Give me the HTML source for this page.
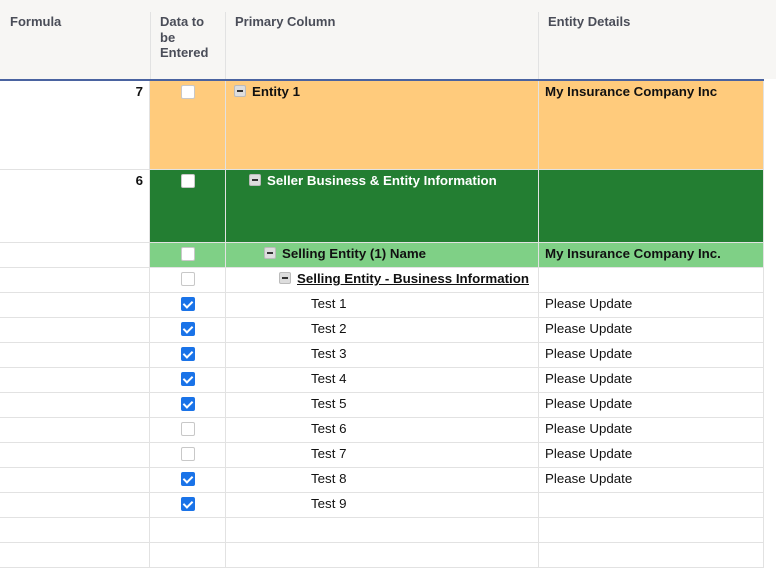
<!DOCTYPE html>
<html><head><meta charset="utf-8"><style>
*{margin:0;padding:0;box-sizing:border-box}
body{width:776px;height:547px;background:#fff;font-family:"Liberation Sans",Arial,sans-serif;font-size:13.3px;color:#111;position:relative;overflow:hidden}
.hdr{position:absolute;left:0;top:0;width:776px;height:79px;background:#f7f6f4}
.hl{position:absolute;top:12px;height:67px;width:1px;background:#e2e2e2}
.ht{position:absolute;top:14px;font-weight:bold;color:#4a4d58;font-size:13px;line-height:15.5px}
.blue{position:absolute;left:0;top:79px;width:764px;height:2px;background:#4a63a0}
.row{position:absolute;left:0;width:764px;border-bottom:1px solid #e2e2e2}
.c{position:absolute;top:0;bottom:0}
.c1{left:0;width:150px;border-right:1px solid #e2e2e2;text-align:right;padding-right:6px;font-weight:bold}
.c2{left:150px;width:76px;border-right:1px solid #e2e2e2}
.c3{left:226px;width:313px;border-right:1px solid #e2e2e2}
.c4{left:539px;width:225px;border-right:1px solid #e2e2e2;padding-left:6px}
.cb{position:absolute;left:31px;width:14px;height:14px;border:1px solid #c8c8c8;border-radius:2px;background:#fff}
.cb.on{background:#1a73e8;border-color:#1a73e8}
.cb.on:after{content:"";position:absolute;left:3px;top:1px;width:4px;height:7px;border:solid #fff;border-width:0 2px 2px 0;transform:rotate(45deg)}
.mn{display:inline-block;width:12px;height:12px;background:#ddd;border:1px solid #bbb;border-radius:2px;position:relative;vertical-align:-1px;margin-right:6px}
.mn:after{content:"";position:absolute;left:2px;top:4px;width:6px;height:2px;background:#333}
.t{position:absolute;white-space:nowrap}
</style></head><body>
<div class="hdr"></div>
<div class="hl" style="left:150px"></div><div class="hl" style="left:225px"></div><div class="hl" style="left:538px"></div>
<div class="ht" style="left:10px">Formula</div>
<div class="ht" style="left:160px">Data to<br>be<br>Entered</div>
<div class="ht" style="left:235px">Primary Column</div>
<div class="ht" style="left:548px">Entity Details</div>
<div class="blue"></div>

<div class="row" style="top:81px;height:89px">
<div class="c c1" style="padding-top:3px">7</div>
<div class="c c2" style="background:#ffcb7c"><div class="cb" style="top:4px"></div></div>
<div class="c c3" style="background:#ffcb7c"><div class="t" style="left:8px;top:3px;font-weight:bold"><span class="mn"></span>Entity 1</div></div>
<div class="c c4" style="background:#ffcb7c;padding-top:3px;font-weight:bold">My Insurance Company Inc</div>
</div>
<div class="row" style="top:170px;height:73px">
<div class="c c1" style="padding-top:3px">6</div>
<div class="c c2" style="background:#237e32"><div class="cb" style="top:4px"></div></div>
<div class="c c3" style="background:#237e32"><div class="t" style="left:23px;top:3px;font-weight:bold;color:#fff"><span class="mn"></span>Seller Business &amp; Entity Information</div></div>
<div class="c c4" style="background:#237e32"></div>
</div>
<div class="row" style="top:243px;height:25px">
<div class="c c1"></div>
<div class="c c2" style="background:#7fd086"><div class="cb" style="top:4px"></div></div>
<div class="c c3" style="background:#7fd086"><div class="t" style="left:38px;top:3px;font-weight:bold"><span class="mn"></span>Selling Entity (1) Name</div></div>
<div class="c c4" style="background:#7fd086;padding-top:3px;font-weight:bold">My Insurance Company Inc.</div>
</div>
<div class="row" style="top:268px;height:25px">
<div class="c c1"></div>
<div class="c c2"><div class="cb" style="top:4px"></div></div>
<div class="c c3"><div class="t" style="left:53px;top:3px;font-weight:bold"><span class="mn"></span><u>Selling Entity - Business Information</u></div></div>
<div class="c c4"></div>
</div>

<div class="row" style="top:293px;height:25px"><div class="c c1"></div><div class="c c2"><div class="cb on" style="top:4px"></div></div><div class="c c3"><div class="t" style="left:85px;top:3px">Test 1</div></div><div class="c c4" style="padding-top:3px">Please Update</div></div>
<div class="row" style="top:318px;height:25px"><div class="c c1"></div><div class="c c2"><div class="cb on" style="top:4px"></div></div><div class="c c3"><div class="t" style="left:85px;top:3px">Test 2</div></div><div class="c c4" style="padding-top:3px">Please Update</div></div>
<div class="row" style="top:343px;height:25px"><div class="c c1"></div><div class="c c2"><div class="cb on" style="top:4px"></div></div><div class="c c3"><div class="t" style="left:85px;top:3px">Test 3</div></div><div class="c c4" style="padding-top:3px">Please Update</div></div>
<div class="row" style="top:368px;height:25px"><div class="c c1"></div><div class="c c2"><div class="cb on" style="top:4px"></div></div><div class="c c3"><div class="t" style="left:85px;top:3px">Test 4</div></div><div class="c c4" style="padding-top:3px">Please Update</div></div>
<div class="row" style="top:393px;height:25px"><div class="c c1"></div><div class="c c2"><div class="cb on" style="top:4px"></div></div><div class="c c3"><div class="t" style="left:85px;top:3px">Test 5</div></div><div class="c c4" style="padding-top:3px">Please Update</div></div>
<div class="row" style="top:418px;height:25px"><div class="c c1"></div><div class="c c2"><div class="cb" style="top:4px"></div></div><div class="c c3"><div class="t" style="left:85px;top:3px">Test 6</div></div><div class="c c4" style="padding-top:3px">Please Update</div></div>
<div class="row" style="top:443px;height:25px"><div class="c c1"></div><div class="c c2"><div class="cb" style="top:4px"></div></div><div class="c c3"><div class="t" style="left:85px;top:3px">Test 7</div></div><div class="c c4" style="padding-top:3px">Please Update</div></div>
<div class="row" style="top:468px;height:25px"><div class="c c1"></div><div class="c c2"><div class="cb on" style="top:4px"></div></div><div class="c c3"><div class="t" style="left:85px;top:3px">Test 8</div></div><div class="c c4" style="padding-top:3px">Please Update</div></div>
<div class="row" style="top:493px;height:25px"><div class="c c1"></div><div class="c c2"><div class="cb on" style="top:4px"></div></div><div class="c c3"><div class="t" style="left:85px;top:3px">Test 9</div></div><div class="c c4"></div></div>
<div class="row" style="top:518px;height:25px"><div class="c c1"></div><div class="c c2"></div><div class="c c3"></div><div class="c c4"></div></div>
<div class="row" style="top:543px;height:25px"><div class="c c1"></div><div class="c c2"></div><div class="c c3"></div><div class="c c4"></div></div>
</body></html>
